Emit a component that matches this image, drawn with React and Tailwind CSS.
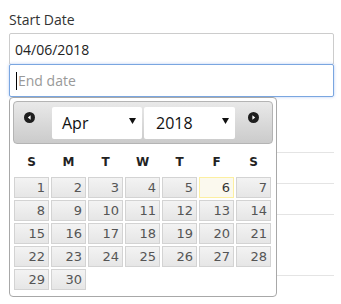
import React from "react";

const sans = { fontFamily: '"Open Sans", "Liberation Sans", sans-serif' };

function CircleArrow({ dir }) {
  return (
    <svg width="11" height="11" viewBox="0 0 11 11" className="shrink-0">
      <circle cx="5.5" cy="5.5" r="5.5" fill="#1e1e1e" />
      {dir === "w" ? (
        <polygon points="6.6,3.2 6.6,7.8 3.8,5.5" fill="#fff" />
      ) : (
        <polygon points="4.4,3.2 4.4,7.8 7.2,5.5" fill="#fff" />
      )}
    </svg>
  );
}

function SelectBox({ value, width, pl }) {
  return (
    <div
      className={`flex h-[32px] items-center justify-between bg-white rounded-[2px] pr-[6px] ${width} ${pl}`}
    >
      <span className="text-[16px] leading-[20px] text-[#111]" style={sans}>
        {value}
      </span>
      <svg width="7" height="6" viewBox="0 0 7 6" className="mt-[-5px]">
        <polygon points="0,0 7,0 3.5,6" fill="#111" />
      </svg>
    </div>
  );
}

export default function App() {
  const days = [];
  for (let i = 1; i <= 30; i++) days.push(i);
  const names = ["S", "M", "T", "W", "T", "F", "S"];
  return (
    <div className="relative w-[341px] h-[304px] overflow-hidden bg-white" style={sans}>
      <div className="pl-[9px] pr-[7px] pt-[10px]">
        <div className="text-[14px] leading-[20px] text-[#333]">Start Date</div>
        <div className="mt-[3px] h-[32px] border border-[#cccccc] rounded-[2px] flex items-center pl-[5px] text-[14px] text-[#222]">
          04/06/2018
        </div>
        <div className="-mt-[1px] h-[33px] border border-[#7aa6e0] rounded-[2px] shadow-[0_0_3px_rgba(102,150,233,0.5)] flex items-center pl-[6px] text-[14px] text-[#999]">
          <span className="w-[1px] h-[18px] bg-black mr-[1px]" />
          End date
        </div>
        <div className="mt-[55px]">
          <div className="border-t border-[#e4e4e4] h-[31px]" />
          <div className="border-t border-[#e4e4e4] h-[31px]" />
          <div className="border-t border-[#e4e4e4] h-[61px]" />
          <div className="border-t border-[#e4e4e4] h-[40px]" />
        </div>
      </div>

      <div
        className="absolute left-[9px] top-[97px] w-[268px] border border-[#a8a8a8] rounded-[4px] bg-white p-[3px]"
        style={{ fontFamily: '"DejaVu Sans", Verdana, sans-serif' }}
      >
        <div className="h-[43px] border border-[#b4b4b4] rounded-[4px] bg-gradient-to-b from-[#e9e9e9] to-[#cbcbcb] flex items-start">
          <div className="ml-[10px] mt-[10px]">
            <CircleArrow dir="w" />
          </div>
          <div className="ml-[17px] mt-[5px]">
            <SelectBox value="Apr" width="w-[90px]" pl="pl-[10px]" />
          </div>
          <div className="ml-[2px] mt-[5px]">
            <SelectBox value="2018" width="w-[91px]" pl="pl-[12px]" />
          </div>
          <div className="ml-[13px] mt-[10px]">
            <CircleArrow dir="e" />
          </div>
        </div>
        <div className="ml-[1px] grid grid-cols-[repeat(7,35px)] gap-x-[2px] h-[33px] items-center pt-[3px]">
          {names.map((n, i) => (
            <div key={i} className="text-center text-[12px] font-bold text-[#222] leading-[16px]">
              {n}
            </div>
          ))}
        </div>
        <div className="ml-[1px] mb-[3px] grid grid-cols-[repeat(7,35px)] gap-[2px]">
          {days.map((d) =>
            d === 6 ? (
              <div
                key={d}
                className="h-[21px] border border-[#fcefa1] bg-[#fbf9ee] text-[#363636] text-right pr-[3px] text-[13px] leading-[19px]"
              >
                {d}
              </div>
            ) : (
              <div
                key={d}
                className="h-[21px] border border-[#d3d3d3] bg-gradient-to-b from-[#f3f3f3] to-[#e6e6e6] text-[#555] text-right pr-[3px] text-[13px] leading-[19px]"
              >
                {d}
              </div>
            )
          )}
        </div>
      </div>
    </div>
  );
}
